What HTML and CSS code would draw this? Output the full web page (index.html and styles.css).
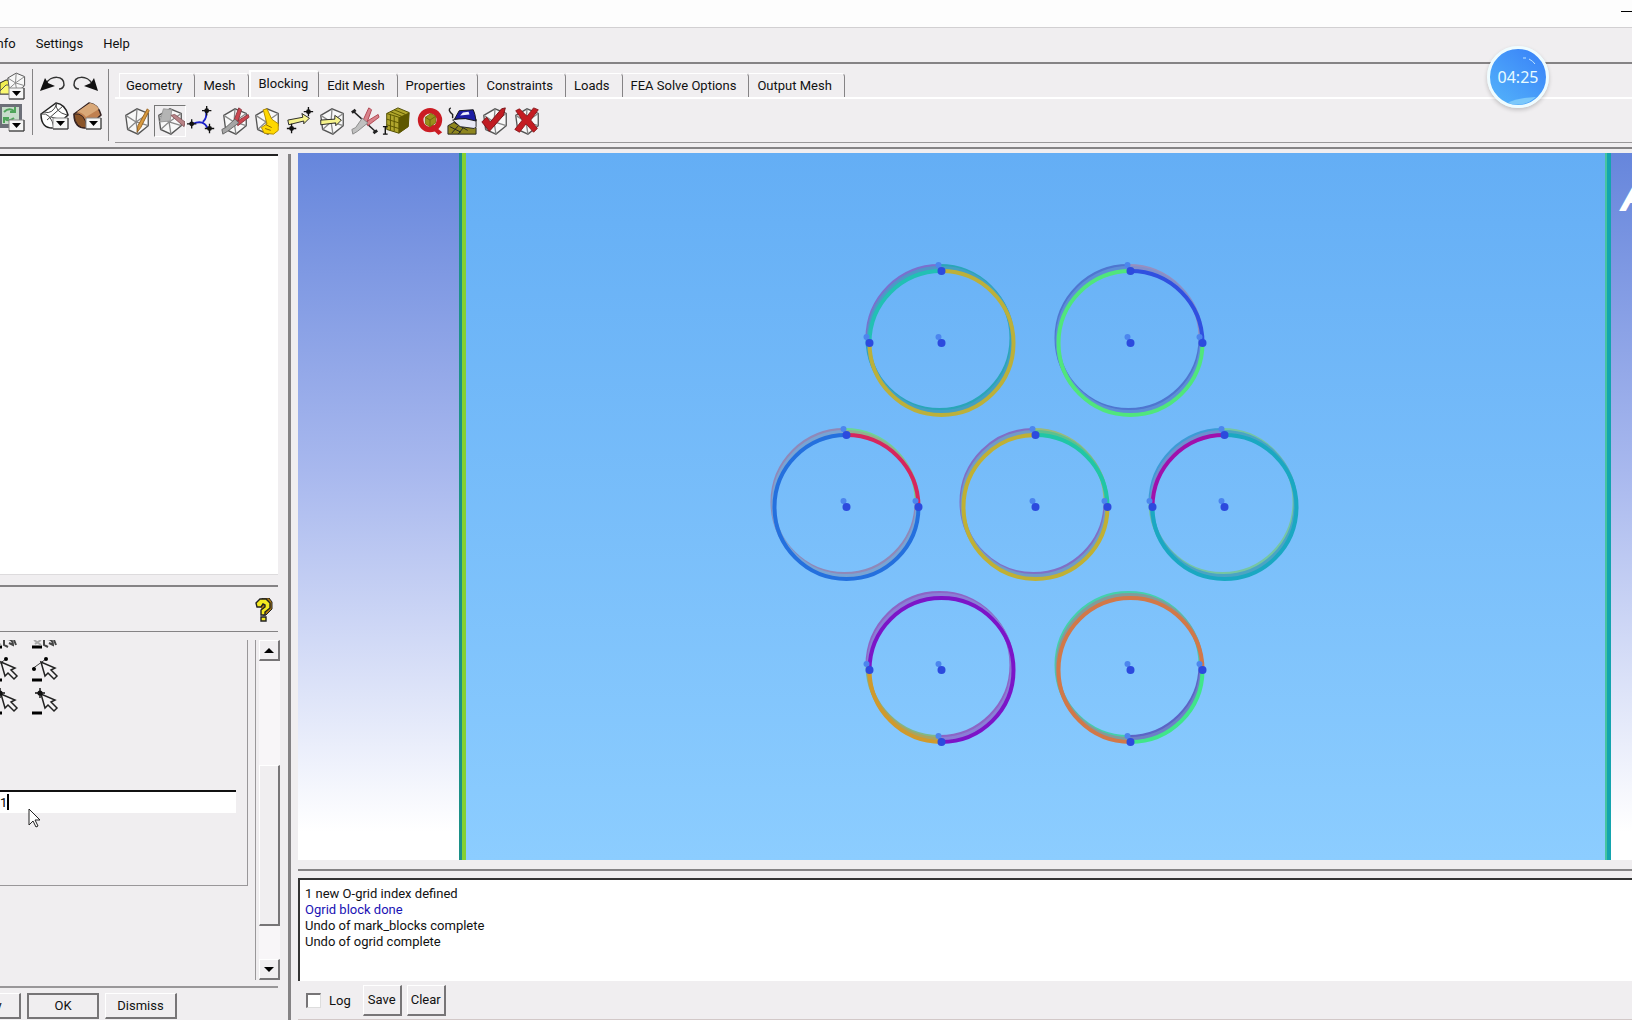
FILE: index.html
```html
<!DOCTYPE html>
<html lang="en">
<head>
    <meta charset="UTF-8">
    <meta name="viewport" content="width=device-width, initial-scale=1.0">
    <title>Blocking</title>
    <link rel="stylesheet" href="styles.css">
</head>
<body>
    <!-- Shared icon parts -->
    <svg class="defs" aria-hidden="true">
        <defs>
            <g id="cage" fill="none" stroke="#555" stroke-width="1.4">
                <path fill="#f8f8f8" d="M4 10L16 3l12 5v13l-11 9-11-5z"/>
                <path d="M4 10l11 7 13-9M15 17l2 13M16 3l-1 14-9 8M15 17l13 4" stroke="#888"/>
            </g>
            <g id="spark">
                <path d="M-5 0H5M0-5V5" stroke="#111" stroke-width="1.4"/>
                <circle r="2.6" fill="#111"/>
            </g>
            <g id="drop">
                <path d="M0 0h15v11H0z" fill="#f6f6f6" stroke="#888"/>
                <path d="M15 0v11H0" fill="none" stroke="#333"/>
                <path d="M3 3h9l-4.500 5z" fill="#000"/>
            </g>
            <path id="pointer" d="M0 0l4 14 3-3 6 6 3-3-6-6 4-2z" fill="#f4f2f4" stroke="#222" stroke-width="1.500"/>
            <path id="quarter" d="M0-72A72 72 0 0 1 72 0" fill="none"/>
            <path id="rest" d="M72 0A72 72 0 1 1 0-72" fill="none"/>
        </defs>
    </svg>

    <header class="titlebar">
        <button class="minimize" aria-label="Minimize"></button>
    </header>

    <nav class="menubar">
        <a href="#" class="cut">Info</a>
        <a href="#">Settings</a>
        <a href="#">Help</a>
    </nav>

    <div class="toolbar">
        <div class="tools-file">
            <button aria-label="Open blocking">
                <svg width="26" height="30" viewBox="0 0 26 30">
                    <path d="M0 12l6-3 12 1v13H0z" fill="#f0ee50" stroke="#222"/>
                    <path d="M0 20l6-6h14l-4 9H0z" fill="#faf870" stroke="#555"/>
                    <g transform="translate(5 0) scale(.7)"><use href="#cage"/></g>
                    <use href="#drop" x="9" y="17"/>
                </svg>
            </button>
            <button aria-label="Refresh">
                <svg width="26" height="30" viewBox="0 0 26 30">
                    <path d="M-2 1h24v24H-2z" fill="#6c6f78"/>
                    <path d="M2 4h17v17H2z" fill="#c8dccb"/>
                    <path d="M4 9q5-5 10-1M15 4v5h-5M14 15q-5 4-9 1M4 20v-5h5" fill="none" stroke="#4fa45a" stroke-width="2"/>
                    <use href="#drop" x="9" y="17"/>
                </svg>
            </button>
        </div>
        <div class="tools-view">
            <button aria-label="Undo">
                <svg width="28" height="28" viewBox="0 0 28 28">
                    <path d="M7 13C11 4 26 4 25 14q-1 4-5 4" fill="none" stroke="#333" stroke-width="1.500"/>
                    <path d="M1 20L6 7l3 5 7 3z" fill="#111"/>
                </svg>
            </button>
            <button aria-label="Redo">
                <svg width="28" height="28" viewBox="0 0 28 28">
                    <path d="M20 13C16 4 1 4 2 14q1 4 5 4" fill="none" stroke="#333" stroke-width="1.500"/>
                    <path d="M26 20L22 7l-3 5-7 3z" fill="#111"/>
                </svg>
            </button>
            <button aria-label="Wireframe display">
                <svg width="30" height="30" viewBox="0 0 30 30">
                    <path d="M2 13L17 2q9 1 12 12L15 27Q2 28 2 13z" fill="#fff" stroke="#222" stroke-width="1.500"/>
                    <path d="M2 13q10-2 13 14M8 19L24 5M5 11q9 3 13-9M12 16l12 3M17 2q-1 9 11 12" fill="none" stroke="#444"/>
                    <use href="#drop" x="14" y="17"/>
                </svg>
            </button>
            <button aria-label="Solid display">
                <svg width="30" height="30" viewBox="0 0 30 30">
                    <path d="M2 13L17 2q9 1 12 12L15 27Q2 28 2 13z" fill="#c08050" stroke="#322" stroke-width="1.500"/>
                    <path d="M5 11L18 2q6 1 9 6L14 16q-4-5-9-5z" fill="#d9a878"/>
                    <path d="M2 13q11-2 13 14Q3 28 2 13z" fill="#8a5428" stroke="#322"/>
                    <use href="#drop" x="14" y="17"/>
                </svg>
            </button>
        </div>

        <div class="ribbon">
            <div class="tabs" role="tablist">
                <button class="tab" role="tab">Geometry</button>
                <button class="tab" role="tab">Mesh</button>
                <button class="tab active" role="tab" aria-selected="true">Blocking</button>
                <button class="tab" role="tab">Edit Mesh</button>
                <button class="tab" role="tab">Properties</button>
                <button class="tab" role="tab">Constraints</button>
                <button class="tab" role="tab">Loads</button>
                <button class="tab" role="tab">FEA Solve Options</button>
                <button class="tab" role="tab">Output Mesh</button>
            </div>
            <div class="actions">
                <button aria-label="Create Block">
                    <svg viewBox="0 0 32 32"><use href="#cage"/><path d="M27 3l2 2-9 18-4 5 1-7z" fill="#d89a40" stroke="#96601c"/></svg>
                </button>
                <button class="pressed" aria-label="Split Block">
                    <svg viewBox="0 0 32 32"><use href="#cage"/><path d="M9 3l9 1-2 12-11 1z" fill="#b4b4b4" stroke="#999"/><path d="M17 10l4-1 11 8-1 5z" fill="#b98488" stroke="#8b5c60"/></svg>
                </button>
                <button aria-label="Merge Vertices">
                    <svg viewBox="0 0 32 32"><path d="M6 19q12-5 16 5M17 17q5-5 3-12" fill="none" stroke="#1c22c8" stroke-width="2"/><use href="#spark" x="5" y="19"/><use href="#spark" x="21" y="5"/><use href="#spark" x="24" y="24"/></svg>
                </button>
                <button aria-label="Edit Block">
                    <svg viewBox="0 0 32 32"><use href="#cage"/><path d="M15 15l5-13 3 2-4 13zM17 17l13-8 1 3-12 9z" fill="#cc4650" stroke="#8c3840"/><path d="M16 14l4 4-12 9-5 3-1-5 4-2z" fill="#a6a6a6" stroke="#666"/></svg>
                </button>
                <button aria-label="Associate">
                    <svg viewBox="0 0 32 32"><use href="#cage"/><path d="M12 4l4-1 5 11 7 5v7l-5 4-10-1-3-6 6-4z" fill="#ffd800" stroke="#b08a00"/><path d="M15 20l6 3M14 24l6 2" stroke="#8a6a00"/></svg>
                </button>
                <button aria-label="Move Vertices">
                    <svg viewBox="0 0 32 32"><path d="M3 15l16-3-1-4 8 5-6 6v-3L4 20z" fill="#f6f38c" stroke="#222"/><use href="#spark" x="25" y="6"/><use href="#spark" x="7" y="24"/></svg>
                </button>
                <button aria-label="Transform Blocks">
                    <svg viewBox="0 0 32 32"><use href="#cage"/><path d="M4 15l15-1v-4l7 5-6 6v-3L4 20z" fill="#f6f38c" stroke="#222"/></svg>
                </button>
                <button aria-label="Edit Edge">
                    <svg viewBox="0 0 32 32"><path d="M4 6l24 22" stroke="#222" stroke-width="1.500"/><path d="M2 7l4-3M25 29l4-3" stroke="#222" stroke-width="3"/><path d="M14 15l6-13 3 2-5 14zM17 17l13-8 1 3-12 9z" fill="#d8828a" stroke="#b04450"/><path d="M13 13l6 5-11 9-5 3-1-5 4-2z" fill="#c0c0c0" stroke="#888"/></svg>
                </button>
                <button aria-label="Pre-Mesh Params">
                    <svg viewBox="0 0 32 32"><path d="M5 8l12-6 12 5-1 15-10 7-13-4z" fill="#b0a62c" stroke="#4d4a00"/><path d="M18 12l11-5-1 15-10 7z" fill="#5e5800"/><path d="M5 8l13 4v17M5 14l13 4M5 20l13 4M9 6l12 5M13 4l12 5M9 9v17M13 11v16" fill="none" stroke="#5a5400"/><path d="M1 22h5M1 30h5M3.500 22v8" stroke="#111" stroke-width="1.500"/></svg>
                </button>
                <button aria-label="Pre-Mesh Quality">
                    <svg viewBox="0 0 32 32"><circle cx="16" cy="15" r="10" fill="none" stroke="#cb1c24" stroke-width="6"/><path d="M18 19l11 9-4 3-9-9z" fill="#cb1c24"/><path d="M11 12l6-4 5 3v7l-6 4-5-3z" fill="#99901c" stroke="#7a7410"/><path d="M11 12l5 3 6-4M16 15v7" fill="none" stroke="#6b650c"/></svg>
                </button>
                <button aria-label="Pre-Mesh Smooth">
                    <svg viewBox="0 0 32 32"><path d="M6 13V9Q0 4 4 2" fill="none" stroke="#222" stroke-width="1.500"/><path d="M1 21l9-5 21 7v7H1z" fill="#8f8720" stroke="#222"/><path d="M3 22l12 6M8 18l14 8M5 29l8-9M12 30l7-9" stroke="#222"/><path d="M6 15l8-2 17 1v8l-2 2-15-2z" fill="#e8e8f4" stroke="#222"/><path d="M8 14l5-9 15-1q2 4 3 12-11-4-23-2z" fill="#1c1ca4" stroke="#111"/><path d="M14 10l3-3 6-1 1 3z" fill="#eef"/></svg>
                </button>
                <button aria-label="Block Checks">
                    <svg viewBox="0 0 32 32"><use href="#cage"/><path d="M2 17l5-5 4 5L23 3l4-1-2 8-15 17z" fill="#c01c22" stroke="#7a1014"/></svg>
                </button>
                <button aria-label="Delete Block">
                    <svg viewBox="0 0 32 32"><use href="#cage"/><path d="M4 5l4-2 8 8 7-9 5 2-8 11 7 9-4 4-8-9-7 9-5-3 8-10z" fill="#c41c22" stroke="#8a1a1e"/></svg>
                </button>
            </div>
        </div>
    </div>

    <main class="workspace">
        <aside class="sidebar">
            <div class="tree"></div>
            <div class="panel-head">
                <button class="help" aria-label="Help">
                    <svg width="18" height="26" viewBox="0 0 18 26">
                        <path d="M4 3L8 0h6l3 4v7l-6 6h-3" fill="#b07c10" stroke="#222"/>
                        <path d="M1 5l4-4h6l4 4v5l-5 4v3H6v-5l4-3V7L8 6 6 9H2z" fill="#f4e820" stroke="#222" stroke-width="1.400"/>
                        <path d="M6 19h5v4H6z" fill="#f4e820" stroke="#222" stroke-width="1.400"/>
                    </svg>
                </button>
            </div>
            <div class="panel-body">
                <form class="params" id="params">
                    <div class="pickers">
                        <button type="button" aria-label="Select"><svg width="30" height="33" viewBox="0 0 30 33"><path d="M3 25h10" stroke="#000" stroke-width="3"/><path d="M5 18l7 5" stroke="#aaa" stroke-width="2"/><path d="M15 18v5l4 2M18 17q6 0 6 6l-4-2M25 18l2 5" fill="none" stroke="#444" stroke-width="2"/></svg></button>
                        <button type="button" aria-label="Select all"><svg width="30" height="33" viewBox="0 0 30 33"><path d="M3 25h10" stroke="#000" stroke-width="3"/><path d="M5 18l7 5M12 18l-6 4" stroke="#aaa" stroke-width="2"/><path d="M15 18v5l4 2M18 17q6 0 6 6l-4-2M25 18l2 5" fill="none" stroke="#444" stroke-width="2"/></svg></button>
                        <button type="button" aria-label="Select edge"><svg width="30" height="33" viewBox="0 0 30 33"><path d="M3 14L17 4" stroke="#444"/><circle cx="5" cy="14" r="2"/><circle cx="17" cy="4" r="2"/><use href="#pointer" x="12" y="7"/><path d="M3 25h10" stroke="#000" stroke-width="3"/></svg></button>
                        <button type="button" aria-label="Select edges"><svg width="30" height="33" viewBox="0 0 30 33"><path d="M3 14L17 4" stroke="#444"/><circle cx="5" cy="14" r="2"/><circle cx="17" cy="4" r="2"/><use href="#pointer" x="12" y="7"/><path d="M3 25h10" stroke="#000" stroke-width="3"/></svg></button>
                        <button type="button" aria-label="Select vertex"><svg width="30" height="33" viewBox="0 0 30 33"><use href="#pointer" x="12" y="6"/><use href="#spark" x="11" y="5"/><path d="M3 25h10" stroke="#000" stroke-width="3"/></svg></button>
                        <button type="button" aria-label="Select vertices"><svg width="30" height="33" viewBox="0 0 30 33"><use href="#pointer" x="12" y="6"/><use href="#spark" x="11" y="5"/><path d="M3 25h10" stroke="#000" stroke-width="3"/></svg></button>
                    </div>
                    <div class="field">
                        <input type="text" value="1" aria-label="Offset">
                        <span class="caret"></span>
                    </div>
                </form>
                <div class="scrollbar">
                    <button type="button" aria-label="Scroll up"><span class="arrow up"></span></button>
                    <div class="track"><div class="thumb"></div></div>
                    <button type="button" aria-label="Scroll down"><span class="arrow down"></span></button>
                </div>
            </div>
            <div class="panel-foot">
                <button class="btn apply" form="params">Apply</button>
                <button class="btn ok" form="params">OK</button>
                <button class="btn dismiss" type="button">Dismiss</button>
            </div>
            <svg class="cursor" width="14" height="21" viewBox="0 0 14 21"><path d="M1 1v16l4-4 3 6 2-1-3-6h5z" fill="#fff" stroke="#222"/></svg>
        </aside>

        <section class="main">
            <div class="viewport">
                <div class="domain"></div>
                <svg class="scene" viewBox="0 0 1335 707" preserveAspectRatio="xMidYMid slice" role="img" aria-label="Seven pipe sections">
                    <g transform="translate(644 190)">
                        <g class="back">
                            <use href="#rest" transform="rotate(-90)" stroke="#2aa6b8"/>
                            <use href="#quarter" transform="rotate(-90)" stroke="#7a70ce"/>
                        </g>
                        <g class="mid">
                            <use href="#rest" transform="rotate(-90)" stroke="#42a0c4"/>
                            <use href="#quarter" transform="rotate(-90)" stroke="#4f96c8"/>
                        </g>
                        <g class="front">
                            <use href="#rest" transform="rotate(-90)" stroke="#bcb03a"/>
                            <use href="#quarter" transform="rotate(-90)" stroke="#22c0b4"/>
                        </g>
                        <g class="back-dots"><circle/><circle cy="-72"/><circle cx="-72"/></g>
                        <g class="front-dots"><circle/><circle cy="-72"/><circle cx="-72"/></g>
                    </g>
                    <g transform="translate(833 190)">
                        <g class="back"><use href="#rest" stroke="#4e76d0"/><use href="#quarter" stroke="#968fc0"/></g>
                        <g class="mid"><use href="#rest" stroke="#5c8fd8"/><use href="#quarter" stroke="#8090cc"/></g>
                        <g class="front"><use href="#rest" stroke="#50e67c"/><use href="#quarter" stroke="#3050e0"/></g>
                        <g class="back-dots"><circle/><circle cy="-72"/><circle cx="72"/></g>
                        <g class="front-dots"><circle/><circle cy="-72"/><circle cx="72"/></g>
                    </g>
                    <g transform="translate(549 354)">
                        <g class="back"><use href="#rest" stroke="#9088b8"/><use href="#quarter" stroke="#6cd694"/></g>
                        <g class="mid"><use href="#rest" stroke="#78a4d4"/><use href="#quarter" stroke="#90b090"/></g>
                        <g class="front"><use href="#rest" stroke="#2470de"/><use href="#quarter" stroke="#d6265e"/></g>
                        <g class="back-dots"><circle/><circle cy="-72"/><circle cx="72"/></g>
                        <g class="front-dots"><circle/><circle cy="-72"/><circle cx="72"/></g>
                    </g>
                    <g transform="translate(738 354)">
                        <g class="back"><use href="#rest" stroke="#806fc6"/><use href="#quarter" stroke="#9aba7c"/></g>
                        <g class="mid"><use href="#rest" stroke="#6f9cc8"/><use href="#quarter" stroke="#5cc090"/></g>
                        <g class="front"><use href="#rest" stroke="#c0b034"/><use href="#quarter" stroke="#20c6a6"/></g>
                        <g class="back-dots"><circle/><circle cy="-72"/><circle cx="72"/></g>
                        <g class="front-dots"><circle/><circle cy="-72"/><circle cx="72"/></g>
                    </g>
                    <g transform="translate(927 354)">
                        <g class="back">
                            <use href="#rest" transform="rotate(-90)" stroke="#76c6a2"/>
                            <use href="#quarter" transform="rotate(-90)" stroke="#3c9cd6"/>
                        </g>
                        <g class="mid">
                            <use href="#rest" transform="rotate(-90)" stroke="#4ba4c4"/>
                            <use href="#quarter" transform="rotate(-90)" stroke="#6c90d0"/>
                        </g>
                        <g class="front">
                            <use href="#rest" transform="rotate(-90)" stroke="#1aa8c2"/>
                            <use href="#quarter" transform="rotate(-90)" stroke="#a010ac"/>
                        </g>
                        <g class="back-dots"><circle/><circle cy="-72"/><circle cx="-72"/></g>
                        <g class="front-dots"><circle/><circle cy="-72"/><circle cx="-72"/></g>
                    </g>
                    <g transform="translate(644 517)">
                        <g class="back">
                            <use href="#rest" transform="rotate(180)" stroke="#8c66c6"/>
                            <use href="#quarter" transform="rotate(180)" stroke="#80b888"/>
                        </g>
                        <g class="mid">
                            <use href="#rest" transform="rotate(180)" stroke="#8a7ed6"/>
                            <use href="#quarter" transform="rotate(180)" stroke="#a8a460"/>
                        </g>
                        <g class="front">
                            <use href="#rest" transform="rotate(180)" stroke="#7c14c8"/>
                            <use href="#quarter" transform="rotate(180)" stroke="#d09a2c"/>
                        </g>
                        <g class="back-dots"><circle/><circle cy="72"/><circle cx="-72"/></g>
                        <g class="front-dots"><circle/><circle cy="72"/><circle cx="-72"/></g>
                    </g>
                    <g transform="translate(833 517)">
                        <g class="back">
                            <use href="#rest" transform="rotate(90)" stroke="#44d0ac"/>
                            <use href="#quarter" transform="rotate(90)" stroke="#5c64c6"/>
                        </g>
                        <g class="mid">
                            <use href="#rest" transform="rotate(90)" stroke="#809c9c"/>
                            <use href="#quarter" transform="rotate(90)" stroke="#6c80c8"/>
                        </g>
                        <g class="front">
                            <use href="#rest" transform="rotate(90)" stroke="#d27848"/>
                            <use href="#quarter" transform="rotate(90)" stroke="#40e68a"/>
                        </g>
                        <g class="back-dots"><circle/><circle cy="72"/><circle cx="72"/></g>
                        <g class="front-dots"><circle/><circle cy="72"/><circle cx="72"/></g>
                    </g>
                </svg>
                <span class="brand">ANSYS</span>
            </div>

            <div class="console">
                <div class="log">
                    <p>1 new O-grid index defined</p>
                    <p class="done">Ogrid block done</p>
                    <p>Undo of mark_blocks complete</p>
                    <p>Undo of ogrid complete</p>
                </div>
                <div class="console-bar">
                    <label><input type="checkbox"> Log</label>
                    <button class="btn">Save</button>
                    <button class="btn">Clear</button>
                </div>
            </div>
        </section>
    </main>

    <div class="timer">
        <svg class="shine" viewBox="0 0 56 56">
            <path d="M33 9h3M39 10q4 2 6 5" fill="none" stroke="#bfe4ff"/>
            <path d="M18 54q8-5 28-6-12 11-28 6z" fill="#7cc8fa"/>
        </svg>
        04:25
    </div>
</body>
</html>
```
FILE: styles.css
```css
* {
    box-sizing: border-box;
}

body {
    margin: 0;
    height: 100vh;
    display: flex;
    flex-direction: column;
    overflow: hidden;
    position: relative;
    background: #f0eef0;
    color: #111;
    font-family: Roboto, "Liberation Sans", sans-serif;
    font-size: 13px;
    line-height: 16px;
}

button {
    margin: 0;
    padding: 0;
    border: none;
    background: none;
    color: inherit;
    font: inherit;
}

svg {
    display: block;
}

.defs {
    position: absolute;
    width: 0;
    height: 0;
}

/* Title bar and menu */
.titlebar {
    flex: none;
    height: 28px;
    display: flex;
    justify-content: flex-end;
    background: #fdfdfd;
    border-bottom: 1px solid #d2d0d2;
}

.minimize {
    width: 11px;
    height: 12px;
    border-bottom: 1px solid #000;
}

.menubar {
    flex: none;
    height: 36px;
    display: flex;
    align-items: center;
    gap: 20px;
    padding-bottom: 3px;
    border-bottom: 2px solid #858385;
}

.menubar a {
    color: inherit;
    text-decoration: none;
}

.menubar .cut {
    margin-left: -7px;
}

/* Toolbar */
.toolbar {
    flex: none;
    height: 85px;
    display: flex;
    border-bottom: 2px solid #858385;
}

.tools-file {
    width: 33px;
    height: 66px;
    margin-top: 5px;
    display: grid;
    grid-template-rows: 34px 30px;
    align-content: start;
    border-right: 1px solid #858385;
}

.tools-view {
    width: 76px;
    height: 72px;
    margin-top: 5px;
    padding-left: 6px;
    display: grid;
    grid-template-columns: 33px 33px;
    grid-template-rows: 32px 30px;
    align-content: start;
    border-right: 1px solid #858385;
}

/* Ribbon */
.ribbon {
    flex: 1;
    height: 79px;
    margin-left: 6px;
    border-bottom: 1px solid #999799;
}

.tabs {
    height: 35px;
    padding: 7px 0 0 4px;
    display: flex;
    align-items: flex-end;
    border-bottom: 2px solid #fff;
}

.tab {
    height: 24px;
    padding: 0 12px 0 8px;
    border-top: 1px solid #fff;
    border-right: 1px solid #858385;
    border-top-right-radius: 4px;
    white-space: nowrap;
}

.tab:first-child {
    padding-left: 6px;
    border-left: 1px solid #fff;
}

.tab.active {
    height: 27px;
    padding: 0 10px 2px 8px;
    border-top: 2px solid #fff;
    border-left: 2px solid #fff;
}

.actions {
    width: 428px;
    padding: 6px 0 0 6px;
    display: flex;
    justify-content: space-between;
}

.actions button {
    width: 32px;
    height: 32px;
    padding: 1px;
}

.actions .pressed {
    border: 1px solid;
    border-color: #777 #fff #fff #777;
    padding: 0;
}

/* Workspace */
.workspace {
    flex: 1;
    min-height: 0;
    display: flex;
}

.sidebar {
    flex: none;
    width: 291px;
    margin-top: 5px;
    padding-right: 10px;
    display: flex;
    flex-direction: column;
    position: relative;
    border-right: 3px solid #858385;
}

.tree {
    flex: 1;
    background: #fff;
    border-top: 2px solid #222;
    border-bottom: 1px solid #dddbdd;
}

.panel-head {
    flex: none;
    height: 47px;
    margin-top: 10px;
    display: flex;
    justify-content: flex-end;
    padding: 11px 5px 0;
    border-top: 2px solid #858385;
    border-bottom: 1px solid #858385;
}

.panel-head .help {
    width: 18px;
    height: 26px;
}

.panel-body {
    flex: none;
    height: 341px;
    margin: 8px -2px 0 0;
    display: flex;
    justify-content: space-between;
    overflow: hidden;
}

.params {
    width: 248px;
    height: 246px;
    border-right: 1px solid #999799;
    border-bottom: 1px solid #999799;
}

.pickers {
    width: 72px;
    margin: -18px 0 0 -11px;
    display: grid;
    grid-template-columns: 40px 30px;
}

.pickers button {
    height: 33px;
}

.field {
    width: 236px;
    height: 23px;
    margin-top: 69px;
    display: flex;
    align-items: center;
    position: relative;
    background: #fff;
    border-top: 2px solid #111;
}

.field input {
    width: 100%;
    padding: 0;
    border: none;
    outline: none;
    background: none;
    font: inherit;
}

.caret {
    position: absolute;
    left: 7px;
    top: 2px;
    width: 2px;
    height: 16px;
    background: #000;
}

.scrollbar {
    width: 25px;
    height: 340px;
    padding-left: 3px;
    display: flex;
    flex-direction: column;
    border-left: 1px solid #999799;
}

.scrollbar button,
.thumb {
    background: #f0eef0;
    border: 1px solid #fff;
    border-right: 2px solid #777577;
    border-bottom: 2px solid #777577;
}

.scrollbar button {
    height: 21px;
    display: flex;
    align-items: center;
    justify-content: center;
}

.track {
    flex: 1;
    padding-top: 104px;
    background: #f8f6f8;
}

.thumb {
    height: 161px;
}

.arrow {
    border: 5px solid transparent;
}

.arrow.up {
    border-top: none;
    border-bottom-color: #000;
}

.arrow.down {
    border-bottom: none;
    border-top-color: #000;
}

.panel-foot {
    flex: none;
    height: 34px;
    margin-top: 5px;
    padding-top: 5px;
    display: flex;
    align-items: flex-start;
    gap: 6px;
    border-top: 2px solid #999799;
}

.btn {
    height: 26px;
    border: 1px solid #fff;
    border-right: 2px solid #777577;
    border-bottom: 2px solid #777577;
}

.apply {
    width: 70px;
    margin-left: -49px;
}

.ok {
    width: 72px;
    border: 2px solid #777577;
}

.dismiss {
    width: 72px;
}

.cursor {
    position: absolute;
    left: 28px;
    top: 654px;
}

/* Viewport */
.main {
    flex: 1;
    min-width: 0;
    margin: 4px 0 0 7px;
    display: flex;
    flex-direction: column;
}

.viewport {
    flex: 1;
    min-height: 0;
    display: flex;
    position: relative;
    overflow: hidden;
    background: linear-gradient(#6686dc, #a8b8ee 45%, #fff 96%);
}

.domain {
    flex: 1;
    margin: 0 21px 0 161px;
    background: linear-gradient(#64aef5, #8ccdff);
    border-left: 3px solid #1c9088;
    border-right: 4px solid #14a4ae;
    box-shadow: inset 4px 0 #84d032, inset -2px 0 #46c4a0;
}

.scene {
    position: absolute;
    left: 0;
    top: 0;
    width: 100%;
    height: 100%;
    stroke-width: 4px;
}

.back {
    transform: translate(-2px, -5px);
}

.mid {
    transform: translate(-1px, -3px);
}

.scene circle {
    r: 3px;
}

.back-dots {
    transform: translate(-3px, -6px);
    fill: #4c86ee;
}

.front-dots {
    fill: #2c4ade;
}

.front-dots circle {
    r: 4px;
}

.brand {
    position: absolute;
    left: calc(100% - 12px);
    top: 15px;
    color: #fff;
    font: italic bold 46px/54px "Liberation Sans", sans-serif;
}

/* Message console */
.console {
    flex: none;
    height: 151px;
    margin-top: 9px;
    padding-top: 7px;
    border-top: 2px solid #858385;
    border-bottom: 1px solid #d2c8c8;
}

.log {
    height: 103px;
    padding: 6px 5px;
    background: #fff;
    border-top: 2px solid #333;
    border-left: 2px solid #333;
}

.log p {
    margin: 0;
}

.log .done {
    color: #1a12b4;
}

.console-bar {
    display: flex;
    align-items: center;
    gap: 5px;
    padding: 4px 0 0 8px;
}

.console-bar label {
    display: flex;
    align-items: center;
    gap: 8px;
    margin-right: 7px;
}

.console-bar input {
    appearance: none;
    width: 15px;
    height: 15px;
    margin: 0;
    background: #fff;
    border: 1px solid #ddd;
    border-top: 2px solid #777577;
    border-left: 2px solid #777577;
}

.console-bar .btn {
    width: 39px;
    height: 31px;
}

/* Floating recorder timer */
.timer {
    position: absolute;
    top: 46px;
    right: 83px;
    width: 62px;
    height: 62px;
    display: flex;
    align-items: center;
    justify-content: center;
    border: 3px solid #effcff;
    border-radius: 50%;
    background: linear-gradient(220deg, #3880f8, #54b4fa);
    box-shadow: 0 2px 4px rgba(0, 0, 0, 0.2);
    color: #e8fcff;
    font: 16px/20px "Noto Sans", sans-serif;
}

.shine {
    position: absolute;
    left: 0;
    top: 0;
    width: 100%;
}
```
